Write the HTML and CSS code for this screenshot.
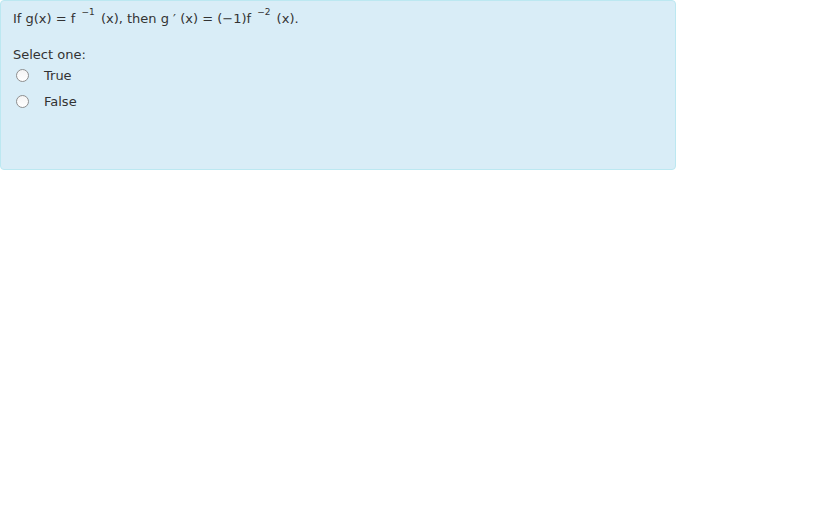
FILE: index.html
```html
<!DOCTYPE html>
<html>
<head>
<meta charset="utf-8">
<link rel="stylesheet" href="styles.css">
</head>
<body>
<div class="que">
  <div class="qtext">If g(x) = f <sup>−1</sup> (x), then g ′ (x) = (−1)f <sup>−2</sup> (x).</div>
  <div class="prompt">Select one:</div>
  <div class="answer">
    <label class="opt"><span class="radio"></span><span class="lbl">True</span></label>
    <label class="opt"><span class="radio"></span><span class="lbl">False</span></label>
  </div>
</div>
</body>
</html>
```
FILE: styles.css
```css
html, body { margin: 0; padding: 0; background: #fff; }
body { font-family: "DejaVu Sans", Verdana, sans-serif; font-size: 13px; color: #333; }
.que {
  width: 676px;
  height: 170px;
  box-sizing: border-box;
  background: #d9edf7;
  border: 1px solid #bce8f1;
  border-radius: 4px;
  padding: 9px 12px;
}
.qtext { line-height: 18px; }
.qtext sup { font-size: 9px; line-height: 0; position: relative; top: -3px; vertical-align: super; margin: 0 2px; }
.prompt { margin-top: 18px; line-height: 18px; }
.answer { display: flex; flex-direction: column; gap: 8px; margin-top: 2px; }
.opt { display: flex; align-items: center; height: 18px; }
.radio {
  width: 13px; height: 13px; border-radius: 50%;
  border: 1px solid #8f8f8f; background: linear-gradient(#f4f4f4, #fff);
  margin-left: 3px; margin-right: 15px;
  box-sizing: border-box;
}
```
